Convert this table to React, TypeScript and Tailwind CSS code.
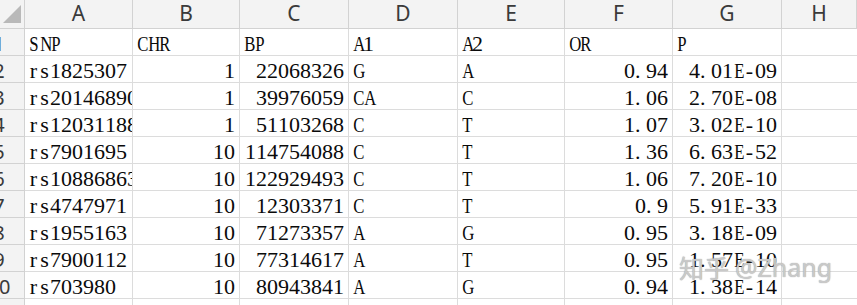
const rows: string[][] = [
  ["SNP", "CHR", "BP", "A1", "A2", "OR", "P"],
  ["rs1825307", "1", "22068326", "G", "A", "0.94", "4.01E-09"],
  ["rs20146890", "1", "39976059", "CA", "C", "1.06", "2.70E-08"],
  ["rs12031188", "1", "51103268", "C", "T", "1.07", "3.02E-10"],
  ["rs7901695", "10", "114754088", "C", "T", "1.36", "6.63E-52"],
  ["rs10886863", "10", "122929493", "C", "T", "1.06", "7.20E-10"],
  ["rs4747971", "10", "12303371", "C", "T", "0.9", "5.91E-33"],
  ["rs1955163", "10", "71273357", "A", "G", "0.95", "3.18E-09"],
  ["rs7900112", "10", "77314617", "A", "T", "0.95", "1.57E-10"],
  ["rs703980", "10", "80943841", "A", "G", "0.94", "1.38E-14"],
  ["", "", "", "", "", "", ""],
];

const letters = ["A", "B", "C", "D", "E", "F", "G", "H"];
const numericCols = [1, 2, 5, 6];

// half-width monospace look, like SimSun in Excel
function MonoText({ text }: { text: string }) {
  return (
    <span className="shrink-0 whitespace-nowrap">
      {text.split("").map((ch, i) => {
        const narrow = /[0-9.\-rs]/.test(ch);
        return (
          <span
            key={i}
            className={`inline-block w-[11px] ${ch === "." ? "text-left" : "text-center"} ${narrow ? "" : "scale-x-[0.76]"}`}
          >
            {ch}
          </span>
        );
      })}
    </span>
  );
}

export default function App() {
  return (
    <div className="relative w-[857px] h-[305px] overflow-hidden bg-white">
      <div className="grid grid-cols-[25px_108px_107px_109px_109px_107px_108px_109px_1fr]">
        {/* column header */}
        <div className="h-[29px] bg-[#f3f3f3] border-r border-b border-[#d2d2d2] flex items-end justify-end pr-[3px] pb-[5px]">
          <svg width="18" height="18" viewBox="0 0 18 18">
            <polygon points="18,0 18,18 0,18" fill="#b9b9b9" />
          </svg>
        </div>
        {letters.map((l) => (
          <div
            key={l}
            className="h-[29px] bg-[#f3f3f3] border-r border-b border-[#d2d2d2] flex items-center justify-center text-[21px] text-[#3a3a3a] font-['Noto_Sans',sans-serif]"
          >
            {l}
          </div>
        ))}

        {rows.map((row, r) => (
          <div key={r} className="contents">
            <div className="h-[27px] overflow-hidden bg-[#f3f3f3] border-r border-b border-[#d2d2d2] flex items-center pt-[3px]">
              <div className="w-[50px] ml-[-26px] shrink-0 text-center text-[20px] text-[#3a3a3a] font-['Noto_Sans',sans-serif]">
                {r + 1}
              </div>
            </div>
            {row.map((v, c) => (
              <div
                key={c}
                className={`h-[27px] overflow-hidden whitespace-nowrap border-r border-b border-[#dcdcdc] flex items-end text-[22px] leading-[22px] text-[#0a0a0a] font-['Liberation_Serif','Noto_Sans_CJK_SC',serif] ${
                  r > 0 && numericCols.includes(c) ? "justify-end pr-[4px]" : "justify-start pl-[3px]"
                }`}
              >
                <MonoText text={v} />
              </div>
            ))}
            <div className="h-[27px] border-b border-[#dcdcdc]" />
          </div>
        ))}
      </div>

      <div className="absolute left-[679px] top-[249px] flex items-center gap-[6px] text-[25px] text-[#d8d8d8]/80 [text-shadow:0_0_1px_#8a8a8a] pointer-events-none">
        <span className="font-['Noto_Sans_CJK_SC',sans-serif]">知乎</span>
        <span className="font-['Noto_Sans',sans-serif]">@Zhang</span>
      </div>
    </div>
  );
}
